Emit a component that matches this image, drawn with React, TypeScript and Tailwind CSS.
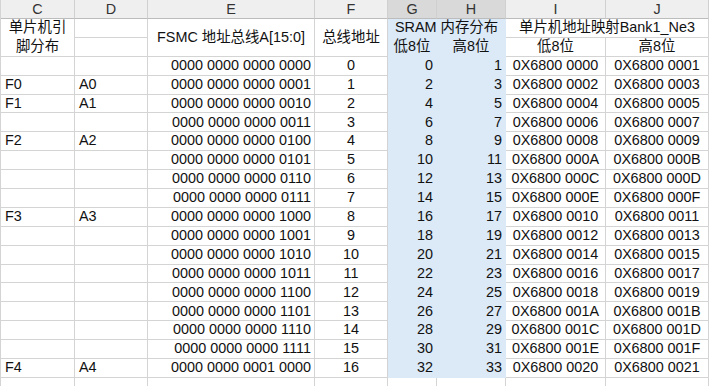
import React from "react";

const FONT = { fontFamily: '"Liberation Sans", Arial, "Noto Sans CJK SC", sans-serif' };

const bin = (n: number) => {
  const s = n.toString(2).padStart(16, "0");
  return `${s.slice(0, 4)} ${s.slice(4, 8)} ${s.slice(8, 12)} ${s.slice(12, 16)}`;
};
const hex = (n: number) => `0X6800 00${n.toString(16).toUpperCase().padStart(2, "0")}`;
const labels: Record<number, [string, string]> = {
  1: ["F0", "A0"],
  2: ["F1", "A1"],
  4: ["F2", "A2"],
  8: ["F3", "A3"],
  16: ["F4", "A4"],
};

const W = "border-r border-b border-[#d4d4d4] bg-white";
const B = "border-r border-b border-[#dce9f6] bg-[#dce9f6]";

export default function App() {
  const rows = Array.from({ length: 17 }, (_, i) => i);
  return (
    <div className="w-[709px] h-[386px] overflow-hidden bg-white text-[14.4px] text-[#111]" style={FONT}>
      <div className="grid grid-cols-[74px_73px_167px_73px_49px_69px_100px_103px] grid-rows-[19px_repeat(19,18.9px)_12px] border-l border-[#d4d4d4]">
        {/* column header row */}
        {["C", "D", "E", "F", "G", "H", "I", "J"].map((c) => (
          <div
            key={c}
            className={`flex items-center justify-center border-r border-b border-r-[#d0d0d0] border-b-[#bcbcbc] text-[#333] leading-none ${
              c === "G" || c === "H" ? "bg-[#d9d9d9]" : "bg-[#efefef]"
            }`}
          >
            {c}
          </div>
        ))}

        {/* title rows */}
        <div className={`${W} row-span-2 flex flex-col items-center justify-center leading-[19px]`}>
          <span>单片机引</span>
          <span>脚分布</span>
        </div>
        <div className={W}></div>
        <div className={`${W} row-span-2 flex items-center justify-center`}>FSMC 地址总线A[15:0]</div>
        <div className={`${W} row-span-2 flex items-center justify-center`}>总线地址</div>
        <div className={`${B} col-span-2 flex items-center justify-center`}>SRAM 内存分布</div>
        <div className={`${W} col-span-2 flex items-center justify-center`}>单片机地址映射Bank1_Ne3</div>
        <div className={W}></div>
        <div className={`${B} flex items-center justify-center`}>低8位</div>
        <div className={`${B} flex items-center justify-center`}>高8位</div>
        <div className={`${W} flex items-center justify-center`}>低8位</div>
        <div className={`${W} flex items-center justify-center`}>高8位</div>

        {/* data rows */}
        {rows.map((i) => (
          <React.Fragment key={i}>
            <div className={`${W} flex items-center pl-[4px]`}>{labels[i]?.[0] ?? ""}</div>
            <div className={`${W} flex items-center pl-[4px]`}>{labels[i]?.[1] ?? ""}</div>
            <div className={`${W} flex items-center justify-end pr-[3px]`}>{bin(i)}</div>
            <div className={`${W} flex items-center justify-center`}>{i}</div>
            <div className={`${B} flex items-center justify-end pr-[3px]`}>{2 * i}</div>
            <div className={`${B} flex items-center justify-end pr-[3px]`}>{2 * i + 1}</div>
            <div className={`${W} flex items-center justify-center`}>{hex(2 * i)}</div>
            <div className={`${W} flex items-center justify-center`}>{hex(2 * i + 1)}</div>
          </React.Fragment>
        ))}

        {/* trailing partial row */}
        {Array.from({ length: 8 }, (_, k) => (
          <div key={`t${k}`} className={W}></div>
        ))}
      </div>
    </div>
  );
}
